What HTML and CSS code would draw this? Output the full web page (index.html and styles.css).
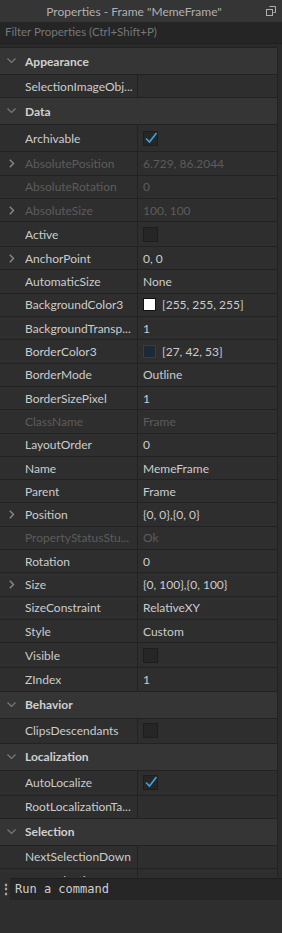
FILE: index.html
```html
<html lang="en">
<head>
    <meta charset="UTF-8">
    <meta name="viewport" content="width=device-width, initial-scale=1.0">
    <title>Properties</title>
    <link rel="stylesheet" href="styles.css">
</head>
<body>
    <div class="panel">
        <div class="titlebar">
            <span class="title">Properties - Frame "MemeFrame"</span>
            <svg class="restore" width="10" height="10" viewBox="0 0 10 10">
                <path d="M3.5 0.5h6v6h-2" fill="none" stroke="#b0b0b0" stroke-width="1"/>
                <rect x="0.5" y="3.5" width="6" height="6" fill="none" stroke="#b0b0b0" stroke-width="1"/>
            </svg>
        </div>
        <div class="filter">Filter Properties (Ctrl+Shift+P)</div>

        <div class="body">
            <div class="grid">
                <div class="section"><span class="exp"><svg width="9" height="6" viewBox="0 0 9 6"><path d="M0.5 0.5l4 4 4-4" fill="none" stroke="#7a7a7a" stroke-width="1.2"/></svg></span>Appearance</div>
                <div class="row"><span class="exp"></span><span class="name">SelectionImageObj...</span><span class="value"></span></div>

                <div class="section"><span class="exp"><svg width="9" height="6" viewBox="0 0 9 6"><path d="M0.5 0.5l4 4 4-4" fill="none" stroke="#7a7a7a" stroke-width="1.2"/></svg></span>Data</div>
                <div class="row tall"><span class="exp"></span><span class="name">Archivable</span><span class="value"><span class="check on"><svg width="14" height="12" viewBox="0 0 14 12"><path d="M2 6.5l3.5 3.5 7-9" fill="none" stroke="#3fa3e0" stroke-width="1.6"/></svg></span></span></div>
                <div class="row dim"><span class="exp"><svg width="6" height="9" viewBox="0 0 6 9"><path d="M0.8 0.8l3.7 3.7-3.7 3.7" fill="none" stroke="#8a8a8a" stroke-width="1.4"/></svg></span><span class="name">AbsolutePosition</span><span class="value">6.729, 86.2044</span></div>
                <div class="row dim"><span class="exp"></span><span class="name">AbsoluteRotation</span><span class="value">0</span></div>
                <div class="row dim"><span class="exp"><svg width="6" height="9" viewBox="0 0 6 9"><path d="M0.8 0.8l3.7 3.7-3.7 3.7" fill="none" stroke="#8a8a8a" stroke-width="1.4"/></svg></span><span class="name">AbsoluteSize</span><span class="value">100, 100</span></div>
                <div class="row box"><span class="exp"></span><span class="name">Active</span><span class="value"><span class="check"></span></span></div>
                <div class="row"><span class="exp"><svg width="6" height="9" viewBox="0 0 6 9"><path d="M0.8 0.8l3.7 3.7-3.7 3.7" fill="none" stroke="#8a8a8a" stroke-width="1.4"/></svg></span><span class="name">AnchorPoint</span><span class="value">0, 0</span></div>
                <div class="row"><span class="exp"></span><span class="name">AutomaticSize</span><span class="value">None</span></div>
                <div class="row"><span class="exp"></span><span class="name">BackgroundColor3</span><span class="value"><span class="swatch white"></span>[255, 255, 255]</span></div>
                <div class="row"><span class="exp"></span><span class="name">BackgroundTransp...</span><span class="value">1</span></div>
                <div class="row"><span class="exp"></span><span class="name">BorderColor3</span><span class="value"><span class="swatch navy"></span>[27, 42, 53]</span></div>
                <div class="row"><span class="exp"></span><span class="name">BorderMode</span><span class="value">Outline</span></div>
                <div class="row"><span class="exp"></span><span class="name">BorderSizePixel</span><span class="value">1</span></div>
                <div class="row dim"><span class="exp"></span><span class="name">ClassName</span><span class="value">Frame</span></div>
                <div class="row"><span class="exp"></span><span class="name">LayoutOrder</span><span class="value">0</span></div>
                <div class="row"><span class="exp"></span><span class="name">Name</span><span class="value">MemeFrame</span></div>
                <div class="row"><span class="exp"></span><span class="name">Parent</span><span class="value">Frame</span></div>
                <div class="row"><span class="exp"><svg width="6" height="9" viewBox="0 0 6 9"><path d="M0.8 0.8l3.7 3.7-3.7 3.7" fill="none" stroke="#8a8a8a" stroke-width="1.4"/></svg></span><span class="name">Position</span><span class="value">{0, 0},{0, 0}</span></div>
                <div class="row dim"><span class="exp"></span><span class="name">PropertyStatusStu...</span><span class="value">Ok</span></div>
                <div class="row"><span class="exp"></span><span class="name">Rotation</span><span class="value">0</span></div>
                <div class="row"><span class="exp"><svg width="6" height="9" viewBox="0 0 6 9"><path d="M0.8 0.8l3.7 3.7-3.7 3.7" fill="none" stroke="#8a8a8a" stroke-width="1.4"/></svg></span><span class="name">Size</span><span class="value">{0, 100},{0, 100}</span></div>
                <div class="row"><span class="exp"></span><span class="name">SizeConstraint</span><span class="value">RelativeXY</span></div>
                <div class="row"><span class="exp"></span><span class="name">Style</span><span class="value">Custom</span></div>
                <div class="row box"><span class="exp"></span><span class="name">Visible</span><span class="value"><span class="check"></span></span></div>
                <div class="row"><span class="exp"></span><span class="name">ZIndex</span><span class="value">1</span></div>

                <div class="section"><span class="exp"><svg width="9" height="6" viewBox="0 0 9 6"><path d="M0.5 0.5l4 4 4-4" fill="none" stroke="#7a7a7a" stroke-width="1.2"/></svg></span>Behavior</div>
                <div class="row box"><span class="exp"></span><span class="name">ClipsDescendants</span><span class="value"><span class="check"></span></span></div>

                <div class="section"><span class="exp"><svg width="9" height="6" viewBox="0 0 9 6"><path d="M0.5 0.5l4 4 4-4" fill="none" stroke="#7a7a7a" stroke-width="1.2"/></svg></span>Localization</div>
                <div class="row box"><span class="exp"></span><span class="name">AutoLocalize</span><span class="value"><span class="check on"><svg width="14" height="12" viewBox="0 0 14 12"><path d="M2 6.5l3.5 3.5 7-9" fill="none" stroke="#3fa3e0" stroke-width="1.6"/></svg></span></span></div>
                <div class="row"><span class="exp"></span><span class="name">RootLocalizationTa...</span><span class="value"></span></div>

                <div class="section"><span class="exp"><svg width="9" height="6" viewBox="0 0 9 6"><path d="M0.5 0.5l4 4 4-4" fill="none" stroke="#7a7a7a" stroke-width="1.2"/></svg></span>Selection</div>
                <div class="row"><span class="exp"></span><span class="name">NextSelectionDown</span><span class="value"></span></div>
                <div class="row"><span class="exp"></span><span class="name">NextSelectionLeft</span><span class="value"></span></div>
            </div>
            <div class="scrollbar"></div>
        </div>

        <div class="cmdbar">
            <span class="grip">⋮</span>
            <div class="cmd">Run a command</div>
        </div>
    </div>
</body>
</html>
```

FILE: styles.css
```css
body {
    margin: 0;
    background-color: #2e2e2e;
    font-family: Lato, "Noto Sans", sans-serif;
    font-size: 12px;
    color: #cccccc;
}
.panel {
    width: 282px;
    height: 933px;
    display: flex;
    flex-direction: column;
    background: #2e2e2e;
    overflow: hidden;
}
.titlebar {
    height: 22px;
    display: flex;
    align-items: center;
    background: #353535;
    color: #b0b0b0;
}
.title {
    flex: 1;
    text-align: center;
    padding-left: 2px;
}
.restore {
    margin: 0 6px 1px 0;
}
.filter {
    height: 21px;
    line-height: 20px;
    background: #252525;
    border-bottom: 1px solid #1f1f1f;
    padding-left: 5px;
    font-size: 11.5px;
    color: #777777;
}
.body {
    height: 830px;
    padding-top: 3px;
    display: flex;
    background: #2a2a2a;
    overflow: hidden;
}
.grid {
    width: 277px;
    border-right: 1px solid #222222;
    background: #2e2e2e;
    overflow: hidden;
}
.scrollbar {
    flex: 1;
    background: #2b2b2b;
}
.section {
    height: 26px;
    display: flex;
    align-items: center;
    background: #353535;
    border-top: 1px solid #222222;
    font-weight: bold;
    color: #d0d0d0;
}
.row {
    height: 22.3px;
    display: grid;
    grid-template-columns: 25px 113px 1fr;
    align-items: center;
    border-top: 1px solid #222222;
}
.row.tall {
    height: 26px;
}
.row.box {
    height: 24px;
}
.exp {
    width: 25px;
    display: flex;
    align-items: center;
    padding-left: 9px;
    box-sizing: border-box;
}
.section .exp {
    padding-left: 7px;
}
.name {
    height: 100%;
    display: flex;
    align-items: center;
    border-right: 1px solid #222222;
    white-space: nowrap;
    overflow: hidden;
}
.value {
    display: flex;
    align-items: center;
    padding-left: 5px;
    white-space: nowrap;
}
.dim .name, .dim .value {
    color: #5c5c5c;
}
.check {
    width: 13px;
    height: 13px;
    background: #262626;
    border: 1px solid #1d1d1d;
    position: relative;
}
.check svg {
    position: absolute;
    left: 0;
    top: 0;
}
.swatch {
    width: 11px;
    height: 11px;
    margin-right: 6px;
    border: 1px solid #111111;
}
.swatch.white {
    background: #ffffff;
}
.swatch.navy {
    background: #1b2a35;
    border-color: #3c3c3c;
}
.cmdbar {
    height: 22px;
    display: flex;
    align-items: stretch;
    margin-top: 1px;
}
.grip {
    width: 10px;
    text-align: center;
    line-height: 21px;
    color: #bbbbbb;
    font-weight: bold;
}
.cmd {
    flex: 1;
    background: #262626;
    border-top: 1px solid #1e1e1e;
    padding-left: 5px;
    line-height: 21px;
    font-family: "DejaVu Sans Mono", "Liberation Mono", monospace;
    font-size: 12px;
    color: #cfcfcf;
}
```
